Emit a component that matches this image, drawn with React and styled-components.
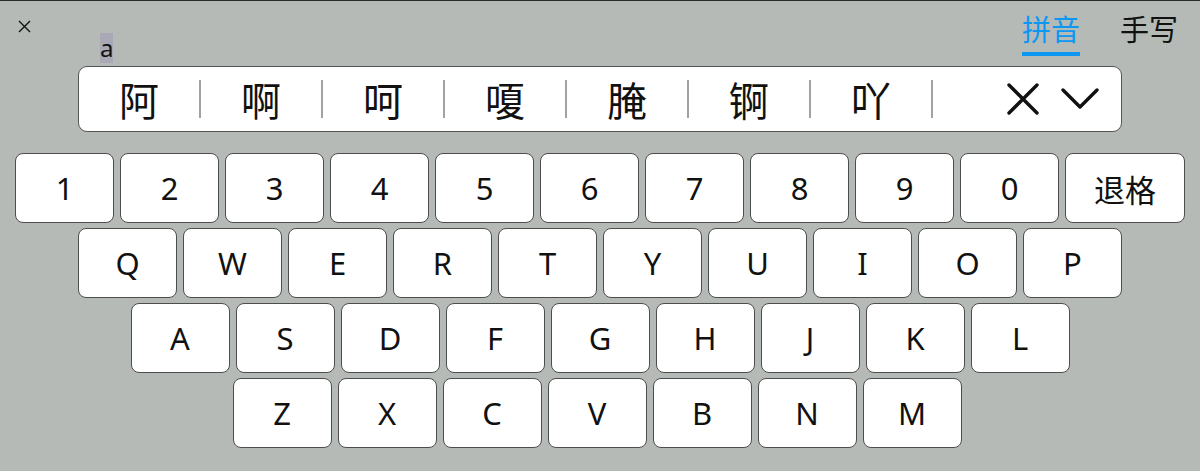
import styled, { createGlobalStyle } from 'styled-components';

const GlobalStyle = createGlobalStyle`
   html, body {
      margin: 0;
      padding: 0;
      background: #b5bab7;
   }
   body {
      font-family: "Noto Sans", "Noto Sans CJK SC", sans-serif;
      color: #111;
   }
`;

const candidates = ['阿', '啊', '呵', '嗄', '腌', '锕', '吖'];

const keyRows = [
   { keys: ['1', '2', '3', '4', '5', '6', '7', '8', '9', '0', '退格'] },
   { keys: ['Q', 'W', 'E', 'R', 'T', 'Y', 'U', 'I', 'O', 'P'] },
   { keys: ['A', 'S', 'D', 'F', 'G', 'H', 'J', 'K', 'L'] },
   { keys: ['Z', 'X', 'C', 'V', 'B', 'N', 'M'], shift: 6 },
];

const CloseIcon = () => (
   <svg width="13" height="13" viewBox="0 0 13 13">
      <path d="M1 1 L12 12 M12 1 L1 12" stroke="#111" strokeWidth="1.4" fill="none" />
   </svg>
);

const ClearIcon = () => (
   <svg width="32" height="32" viewBox="0 0 32 32">
      <path d="M2 2 L30 30 M30 2 L2 30" stroke="#111" strokeWidth="3.4" strokeLinecap="round" fill="none" />
   </svg>
);

const ExpandIcon = () => (
   <svg width="38" height="22" viewBox="0 0 38 22">
      <path d="M2 2 L19 19 L36 2" stroke="#111" strokeWidth="3.4" strokeLinecap="round" strokeLinejoin="round" fill="none" />
   </svg>
);

export default function App() {
   return (
      <Screen>
         <GlobalStyle />
         <Header>
            <Composer>
               <CloseButton>
                  <CloseIcon />
               </CloseButton>
               <Composition>a</Composition>
            </Composer>
            <Tabs>
               <Tab $active>拼音</Tab>
               <Tab>手写</Tab>
            </Tabs>
         </Header>

         <CandidateBar>
            {candidates.map((c) => (
               <Candidate key={c}>{c}</Candidate>
            ))}
            <BarActions>
               <ClearIcon />
               <ExpandIcon />
            </BarActions>
         </CandidateBar>

         <Keyboard>
            {keyRows.map((row, i) => (
               <KeyRow key={i} $shift={row.shift || 0}>
                  {row.keys.map((k) => (
                     <Key key={k} $wide={k === '退格'}>
                        {k}
                     </Key>
                  ))}
               </KeyRow>
            ))}
         </Keyboard>
      </Screen>
   );
}

const Screen = styled.div`
   width: 1200px;
   height: 471px;
   box-sizing: border-box;
   border-top: 1px solid #2b2b2b;
   display: flex;
   flex-direction: column;
   overflow: hidden;
`;

const Header = styled.div`
   height: 65px;
   display: flex;
   justify-content: space-between;
   align-items: flex-start;
`;

const Composer = styled.div`
   display: flex;
   flex-direction: column;
   align-items: flex-start;
   padding: 19px 0 0 18px;
`;

const CloseButton = styled.div`
   width: 13px;
   height: 13px;
   display: flex;
`;

const Composition = styled.span`
   margin-left: 82px;
   background: #a9a9b6;
   font-size: 24px;
   line-height: 30px;
   height: 30px;
`;

const Tabs = styled.div`
   display: flex;
   gap: 40px;
   padding: 11px 22px 0 0;
`;

const Tab = styled.div`
   font-size: 29px;
   line-height: 36px;
   padding-bottom: 4px;
   border-bottom: 4px solid ${(p) => (p.$active ? '#0c97f2' : 'transparent')};
   color: ${(p) => (p.$active ? '#0c97f2' : '#111')};
`;

const CandidateBar = styled.div`
   margin: 0 78px;
   height: 66px;
   box-sizing: border-box;
   background: #fff;
   border: 1px solid #555;
   border-radius: 9px;
   display: flex;
   align-items: center;
`;

const Candidate = styled.div`
   width: 120px;
   height: 38px;
   border-right: 2px solid #a2a2a2;
   display: flex;
   align-items: center;
   justify-content: center;
   font-family: "Noto Sans CJK SC", sans-serif;
   font-size: 40px;
   line-height: 1;
`;

const BarActions = styled.div`
   flex: 1;
   display: flex;
   align-items: center;
   justify-content: flex-end;
   gap: 22px;
   padding-right: 22px;
`;

const Keyboard = styled.div`
   margin-top: 21px;
   display: flex;
   flex-direction: column;
   gap: 5px;
`;

const KeyRow = styled.div`
   display: flex;
   justify-content: center;
   gap: 6px;
   padding-right: ${(p) => p.$shift}px;
`;

const Key = styled.div`
   width: ${(p) => (p.$wide ? '120px' : '99px')};
   height: 70px;
   box-sizing: border-box;
   background: #fff;
   border: 1px solid #4d4d4d;
   border-radius: 8px;
   display: flex;
   align-items: center;
   justify-content: center;
   font-size: 31px;
   color: #111;
`;
